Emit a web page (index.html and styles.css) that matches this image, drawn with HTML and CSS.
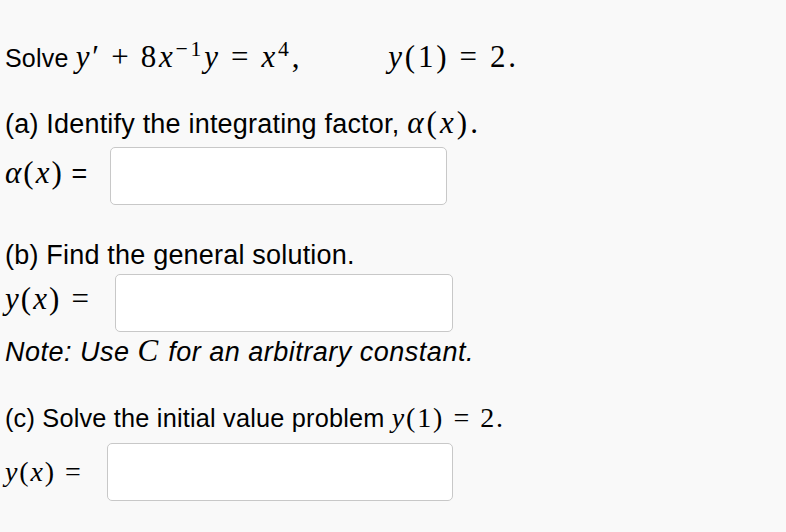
FILE: index.html
```html
<!DOCTYPE html>
<html>
<head>
<meta charset="utf-8">
<link rel="stylesheet" href="styles.css">
</head>
<body>
<div class="page">
  <p class="line l1">Solve <span class="m"><i>y</i>′<span class="bin">+</span>8<i>x</i><sup>−1</sup><i>y</i><span class="rel">=</span><i>x</i><sup>4</sup>,</span><span class="gap"></span><span class="m"><i>y</i>(1)<span class="rel">=</span>2.</span></p>

  <p class="line la">(a) Identify the integrating factor, <span class="m"><i>α</i>(<i>x</i>).</span></p>
  <div class="row ra">
    <span class="label"><span class="m"><i>α</i>(<i>x</i>)</span> =</span>
    <span class="box"></span>
  </div>

  <p class="line lb">(b) Find the general solution.</p>
  <div class="row rb">
    <span class="label m"><i>y</i>(<i>x</i>)<span class="rel">=</span></span>
    <span class="box"></span>
  </div>
  <p class="line note"><em>Note: Use <span class="m"><i>C</i></span> for an arbitrary constant.</em></p>

  <p class="line lc">(c) Solve the initial value problem <span class="m"><i>y</i>(1)<span class="rel">=</span>2.</span></p>
  <div class="row rc">
    <span class="label m"><i>y</i>(<i>x</i>)<span class="rel">=</span></span>
    <span class="box"></span>
  </div>
</div>
</body>
</html>
```
FILE: styles.css
```css
html, body {
  margin: 0;
  padding: 0;
  background: #f9f9f9;
}
.page {
  padding: 0 0 0 5px;
  font-family: "Liberation Sans", Arial, sans-serif;
  font-size: 27px;
  letter-spacing: 0.2px;
  color: #000;
}
.line {
  margin: 0;
  height: 34px;
  line-height: 34px;
  white-space: nowrap;
}
.m {
  font-family: "Liberation Serif", "Times New Roman", serif;
  font-size: 31px;
  font-style: normal;
  line-height: 1;
  letter-spacing: 0.065em;
}
.m i { font-style: italic; }
.m sup { font-size: 0.7em; line-height: 0; vertical-align: 0.5em; }
.rel { margin: 0 0.33em; }
.bin { margin: 0 0.3em; }
.gap { display: inline-block; width: 86px; }
.l1 { margin-top: 41px; font-size: 25px; }
.l1 .m { letter-spacing: 0.09em; }
.la { margin-top: 32px; }
.la .m { letter-spacing: 0.1em; }
.row {
  display: flex;
  align-items: center;
  height: 58px;
}
.label { white-space: nowrap; flex: none; }
.box {
  display: block;
  box-sizing: border-box;
  height: 58px;
  background: #fff;
  border: 1px solid #c8c8c8;
  border-radius: 5px;
}
.ra { margin-top: 6px; }
.ra .label { margin-bottom: 6px; width: 105px; }
.ra .box { width: 337px; }
.lb { margin-top: 33px; }
.rb { margin-top: 2px; }
.rb .label { margin-bottom: 10px; width: 110px; }
.rb .box { width: 338px; }
.note { margin-top: 3px; letter-spacing: 0.5px; }
.lc { margin-top: 32px; font-size: 25.3px; }
.lc .m { font-size: 28px; }
.rc { margin-top: 8px; }
.rc .label { width: 102px; font-size: 28px; }
.rc .box { width: 346px; }
```
